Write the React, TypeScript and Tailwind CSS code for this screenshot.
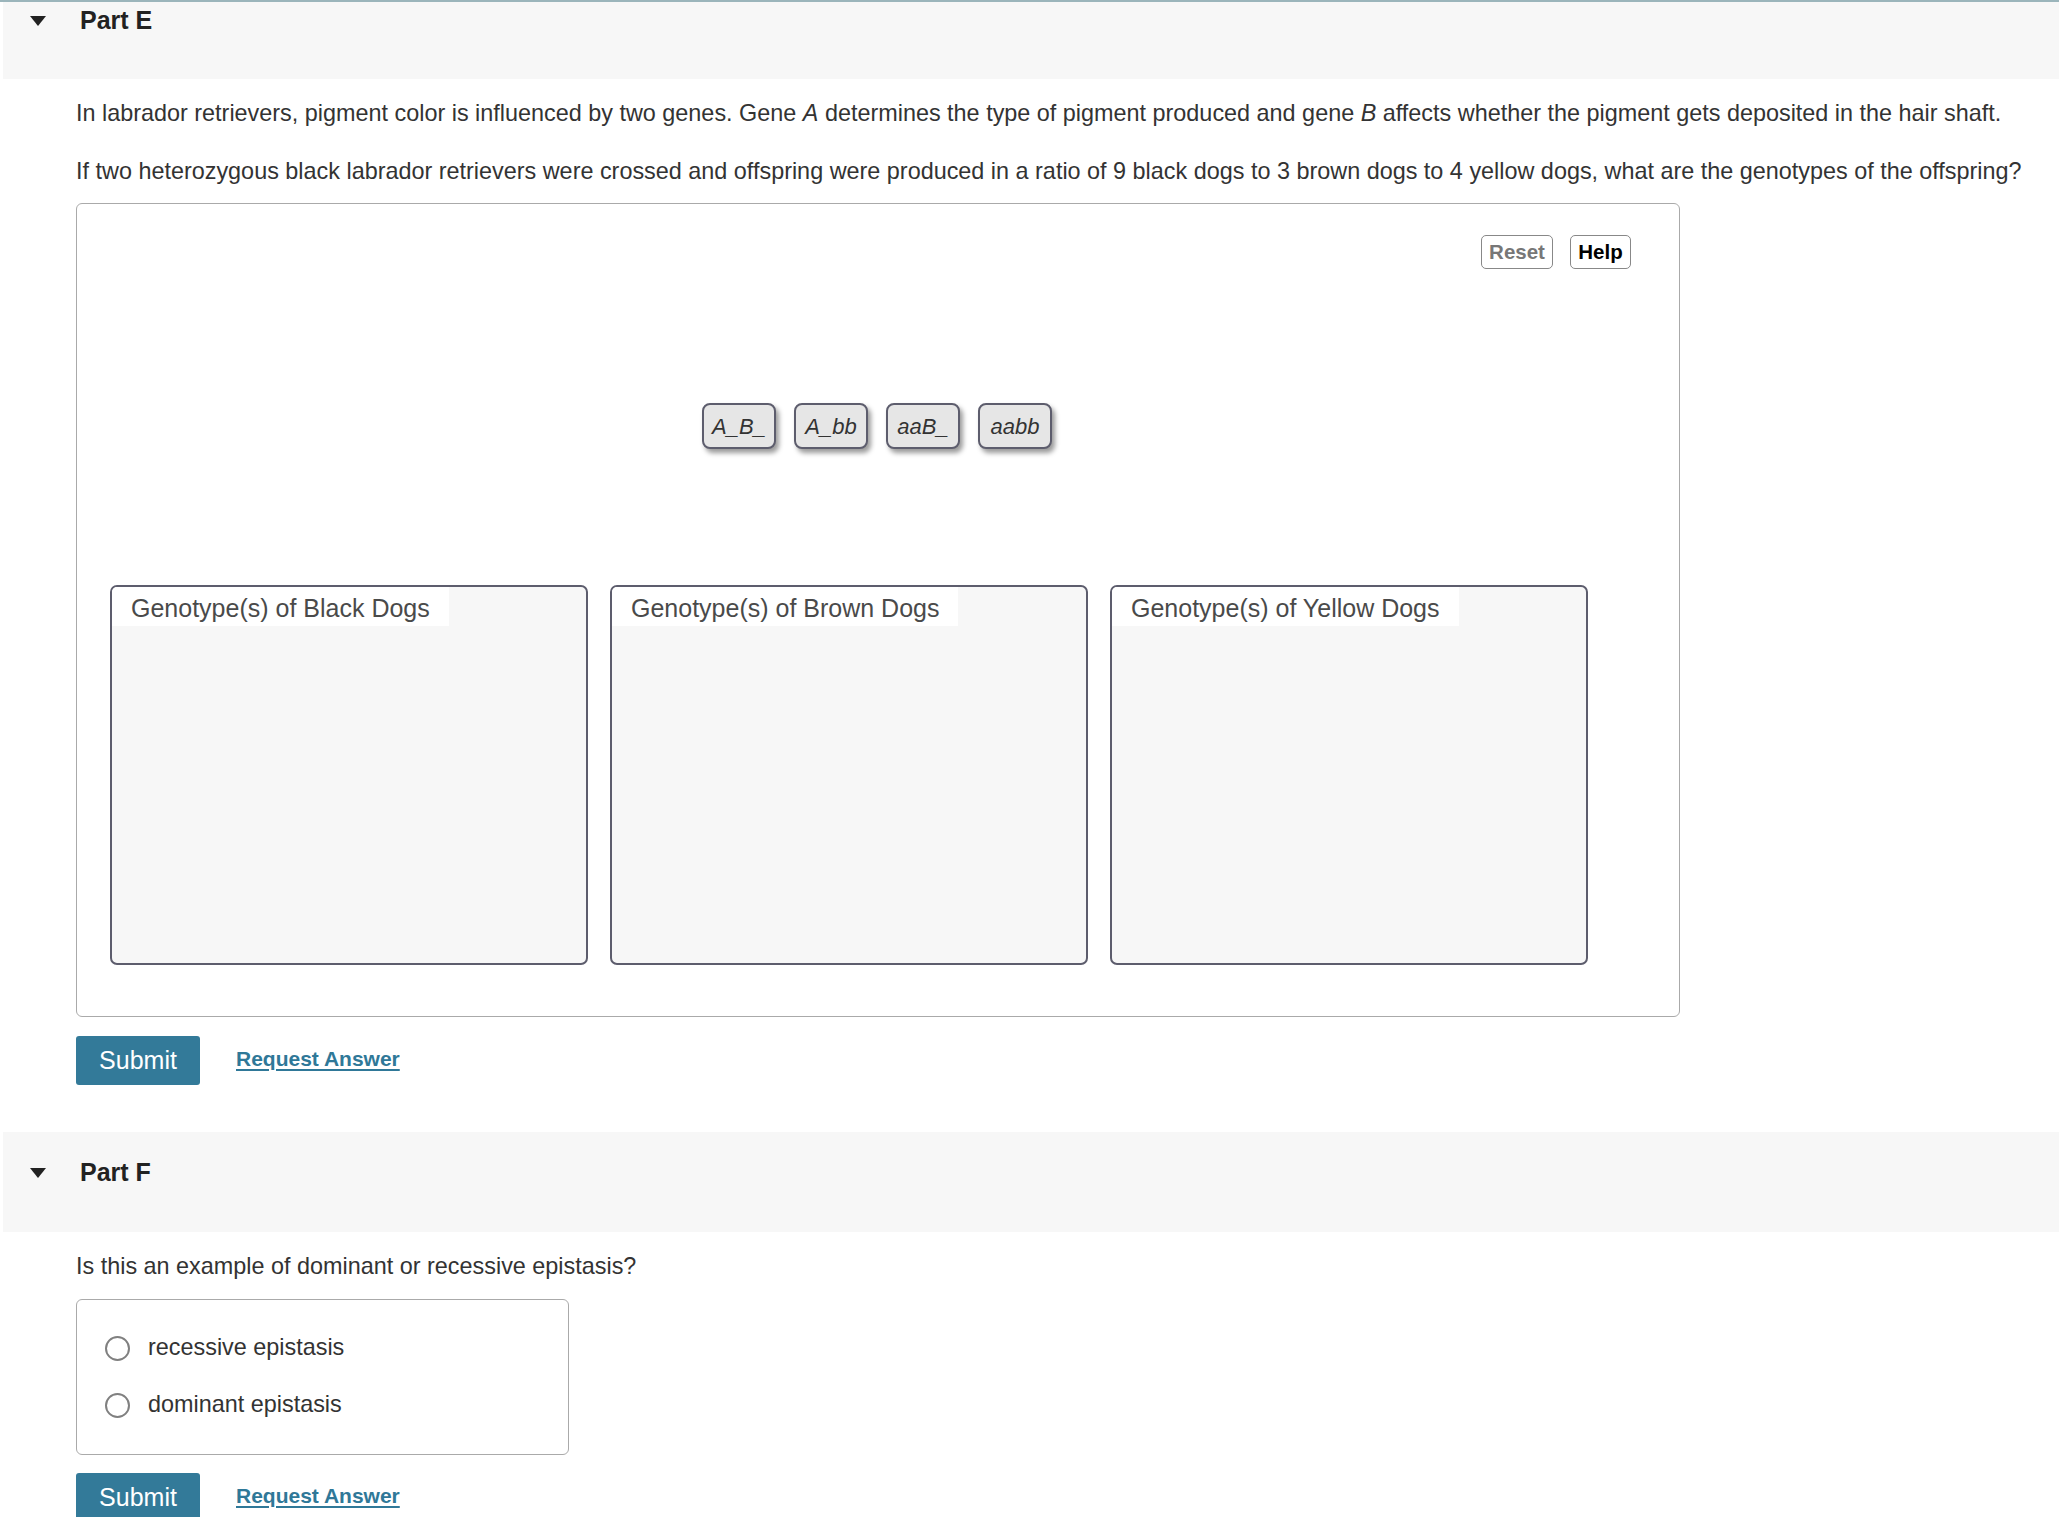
import React from "react";

function Caret() {
  return (
    <svg width="16" height="10" viewBox="0 0 16 10" className="shrink-0">
      <path d="M0 0 L16 0 L8 10 Z" fill="#222" />
    </svg>
  );
}

function Token({ label }: { label: string }) {
  return (
    <div className="w-[74px] h-[46px] flex items-center justify-center rounded-[8px] border-2 border-[#5d5d6d] bg-[#e6e6e6] shadow-[3px_4px_5px_rgba(0,0,0,0.4)] italic text-[22px] text-[#333]">
      {label}
    </div>
  );
}

function Zone({ label }: { label: string }) {
  return (
    <div className="w-[478px] h-[380px] rounded-[7px] border-2 border-[#5d5d6d] bg-[#f7f7f7] overflow-hidden">
      <div className="inline-block bg-white h-[39px] pt-[3px] pl-[19px] pr-[19px] leading-[36px] text-[25px] text-[#4a4a4a]">
        {label}
      </div>
    </div>
  );
}

function ActionRow() {
  return (
    <div className="flex items-center gap-[36px]">
      <button className="w-[124px] h-[49px] rounded-[3px] bg-[#337a99] text-white text-[25px] leading-none">
        Submit
      </button>
      <a className="text-[21px] font-bold text-[#2f7898] underline decoration-2 underline-offset-[3px] -mt-[3px]">
        Request Answer
      </a>
    </div>
  );
}

export default function App() {
  return (
    <div className="w-[2059px] min-h-[1517px] bg-white text-[#333] font-['Liberation_Sans',Arial,sans-serif] border-t-2 border-[#9bb5bb]">
      {/* Part E header */}
      <div className="ml-[3px] h-[77px] bg-[#f7f7f7] flex items-start">
        <div className="flex items-center h-[38px] pl-[27px] gap-[34px]">
          <Caret />
          <span className="text-[25px] font-bold text-[#222]">Part E</span>
        </div>
      </div>

      <div className="pl-[76px]">
        <p className="mt-[19px] text-[23.4px] leading-[30px] whitespace-nowrap">
          In labrador retrievers, pigment color is influenced by two genes. Gene <i>A</i> determines the type of pigment produced and gene <i>B</i> affects whether the pigment gets deposited in the hair shaft.
        </p>
        <p className="mt-[28px] text-[23.4px] leading-[30px] whitespace-nowrap">
          If two heterozygous black labrador retrievers were crossed and offspring were produced in a ratio of 9 black dogs to 3 brown dogs to 4 yellow dogs, what are the genotypes of the offspring?
        </p>

        <div className="mt-[17px] w-[1604px] h-[814px] border border-[#aaaaaa] rounded-[6px] pt-[31px]">
          <div className="flex justify-end gap-[17px] pr-[48px]">
            <button className="w-[72px] h-[34px] rounded-[5px] border border-[#888] bg-white text-[20.5px] font-bold text-[#777] leading-none">
              Reset
            </button>
            <button className="w-[61px] h-[34px] rounded-[5px] border border-[#888] bg-white text-[20.5px] font-bold text-black leading-none">
              Help
            </button>
          </div>

          <div className="mt-[134px] ml-[625px] flex gap-[18px]">
            <Token label="A_B_" />
            <Token label="A_bb" />
            <Token label="aaB_" />
            <Token label="aabb" />
          </div>

          <div className="mt-[136px] ml-[33px] flex gap-[22px]">
            <Zone label="Genotype(s) of Black Dogs" />
            <Zone label="Genotype(s) of Brown Dogs" />
            <Zone label="Genotype(s) of Yellow Dogs" />
          </div>
        </div>

        <div className="mt-[19px]">
          <ActionRow />
        </div>
      </div>

      {/* Part F header */}
      <div className="mt-[47px] ml-[3px] h-[100px] bg-[#f7f7f7] flex items-start">
        <div className="flex items-center h-[38px] mt-[22px] pl-[27px] gap-[34px]">
          <Caret />
          <span className="text-[25px] font-bold text-[#222]">Part F</span>
        </div>
      </div>

      <div className="pl-[76px]">
        <p className="mt-[19px] text-[23.4px] leading-[30px]">
          Is this an example of dominant or recessive epistasis?
        </p>

        <div className="mt-[18px] w-[493px] h-[156px] border border-[#aaaaaa] rounded-[6px] pl-[28px] pt-[35px] flex flex-col gap-[31px]">
          <label className="flex items-center gap-[18px] h-[26px]">
            <span className="w-[25px] h-[25px] rounded-full border-2 border-[#808080] bg-white" />
            <span className="text-[23.4px]">recessive epistasis</span>
          </label>
          <label className="flex items-center gap-[18px] h-[26px]">
            <span className="w-[25px] h-[25px] rounded-full border-2 border-[#808080] bg-white" />
            <span className="text-[23.4px]">dominant epistasis</span>
          </label>
        </div>

        <div className="mt-[18px]">
          <ActionRow />
        </div>
      </div>
    </div>
  );
}
